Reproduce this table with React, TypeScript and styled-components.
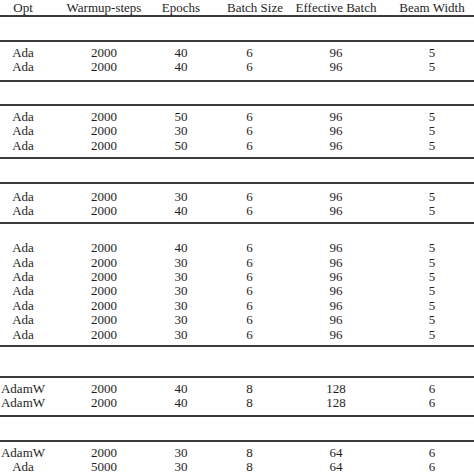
import React from 'react';
import styled, { createGlobalStyle } from 'styled-components';

const GlobalStyle = createGlobalStyle`
    body {
        margin: 0;
        background: #ffffff;
        font-family: "Liberation Serif", "Times New Roman", Times, "DejaVu Serif", serif;
    }
`

const Page = styled.div`
    width: 474px;
    height: 474px;
    overflow: hidden;
    background: #ffffff;
    color: #1e1e1e;
    font-family: 'Liberation Serif', 'Times New Roman', Times, 'DejaVu Serif', serif;
    font-size: 13px;
    display: flex;
    flex-direction: column;
`

const Row = styled.div<{ $height?: number }>`
    display: grid;
    grid-template-columns: 46px 116px 38px 110px 52px 1fr;
    height: ${p => p.$height ?? 14.4}px;
    line-height: ${p => p.$height ?? 14.4}px;
    white-space: nowrap;
`

const Cell = styled.div<{ $shiftRight?: number; $shiftLeft?: number }>`
    display: flex;
    justify-content: center;
    padding-right: ${p => p.$shiftRight ?? 0}px;
    padding-left: ${p => p.$shiftLeft ?? 0}px;
`

const Rule = styled.div`
    height: 2px;
    background: #3c3c3c;
    flex-shrink: 0;
`

const Gap = styled.div<{ $size: number }>`
    height: ${p => p.$size}px;
    flex-shrink: 0;
`

const Group = styled.div<{ $top: number; $bottom: number }>`
    padding-top: ${p => p.$top}px;
    padding-bottom: ${p => p.$bottom}px;
`

type Entry = [string, string, string, string, string, string]

const header: Entry = ['Opt', 'Warmup-steps', 'Epochs', 'Batch Size', 'Effective Batch', 'Beam Width']

const groups: { gap: number; topRule: boolean; top: number; bottom: number; rows: Entry[] }[] = [
    { gap: 23, topRule: true, top: 4, bottom: 5, rows: [
        ['Ada', '2000', '40', '6', '96', '5'],
        ['Ada', '2000', '40', '6', '96', '5'],
    ] },
    { gap: 22, topRule: true, top: 4, bottom: 4.5, rows: [
        ['Ada', '2000', '50', '6', '96', '5'],
        ['Ada', '2000', '30', '6', '96', '5'],
        ['Ada', '2000', '50', '6', '96', '5'],
    ] },
    { gap: 23, topRule: true, top: 5.5, bottom: 3.5, rows: [
        ['Ada', '2000', '30', '6', '96', '5'],
        ['Ada', '2000', '40', '6', '96', '5'],
    ] },
    { gap: 17, topRule: false, top: 0, bottom: 3, rows: [
        ['Ada', '2000', '40', '6', '96', '5'],
        ['Ada', '2000', '30', '6', '96', '5'],
        ['Ada', '2000', '30', '6', '96', '5'],
        ['Ada', '2000', '30', '6', '96', '5'],
        ['Ada', '2000', '30', '6', '96', '5'],
        ['Ada', '2000', '30', '6', '96', '5'],
        ['Ada', '2000', '30', '6', '96', '5'],
    ] },
    { gap: 29, topRule: true, top: 4, bottom: 4, rows: [
        ['AdamW', '2000', '40', '8', '128', '6'],
        ['AdamW', '2000', '40', '8', '128', '6'],
    ] },
    { gap: 23, topRule: true, top: 4, bottom: 4, rows: [
        ['AdamW', '2000', '30', '8', '64', '6'],
        ['Ada', '5000', '30', '8', '64', '6'],
    ] },
]

function TableRow({ entry, head }: { entry: Entry; head?: boolean }) {
    return (
        <Row $height={head ? 14 : undefined}>
            <Cell>{entry[0]}</Cell>
            <Cell>{entry[1]}</Cell>
            <Cell>{entry[2]}</Cell>
            <Cell $shiftRight={head ? 0 : 11}>{entry[3]}</Cell>
            <Cell>{entry[4]}</Cell>
            <Cell $shiftLeft={28}>{entry[5]}</Cell>
        </Row>
    )
}

export default function App() {
    return (
        <React.Fragment>
            <GlobalStyle />
            <Page>
                <Gap $size={1} />
                <TableRow entry={header} head />
                <Rule />
                {groups.map((g, i) => (
                    <React.Fragment key={i}>
                        <Gap $size={g.gap} />
                        {g.topRule && <Rule />}
                        <Group $top={g.top} $bottom={g.bottom}>
                            {g.rows.map((r, j) => <TableRow key={j} entry={r} />)}
                        </Group>
                        <Rule />
                    </React.Fragment>
                ))}
            </Page>
        </React.Fragment>
    )
}
